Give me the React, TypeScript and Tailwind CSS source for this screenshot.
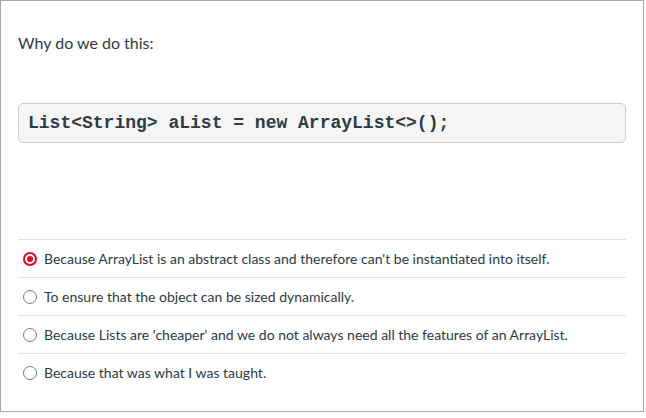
import React, { useState } from "react";

const options = [
  "Because ArrayList is an abstract class and therefore can't be instantiated into itself.",
  "To ensure that the object can be sized dynamically.",
  "Because Lists are 'cheaper' and we do not always need all the features of an ArrayList.",
  "Because that was what I was taught.",
];

function Radio({ checked }: { checked: boolean }) {
  if (checked) {
    return (
      <span className="flex h-[14px] w-[14px] shrink-0 items-center justify-center rounded-full border-2 border-[#e0061f] bg-white">
        <span className="h-[6px] w-[6px] rounded-full bg-[#e0061f]" />
      </span>
    );
  }
  return <span className="h-[14px] w-[14px] shrink-0 rounded-full border border-[#737d85] bg-white" />;
}

export default function App() {
  const [selected, setSelected] = useState(0);

  return (
    <div className="h-[412px] w-[644px] border border-[#a8a8a8] bg-white font-['Lato','Noto_Sans',sans-serif] text-[#2d3b45]">
      <div className="px-[17px] pt-[32px]">
        <p className="text-[16px] leading-5">Why do we do this:</p>
        <div className="mt-[50px] flex h-[40px] items-center rounded-[5px] border border-[#c7cdd1] bg-[#f5f5f5] px-[9px] font-['Liberation_Mono',monospace] text-[18px] font-bold text-[#2d3b45]">
          <span className="pt-[1px]">List&lt;String&gt; aList = new ArrayList&lt;&gt;();</span>
        </div>
        <div className="mt-[96px]">
          {options.map((o, i) => (
            <label
              key={i}
              onClick={() => setSelected(i)}
              className="flex h-[38px] cursor-pointer items-center gap-[7px] border-t border-[#dfe3e6] pl-[5px] text-[14px]"
            >
              <Radio checked={selected === i} />
              <span>{o}</span>
            </label>
          ))}
        </div>
      </div>
    </div>
  );
}
